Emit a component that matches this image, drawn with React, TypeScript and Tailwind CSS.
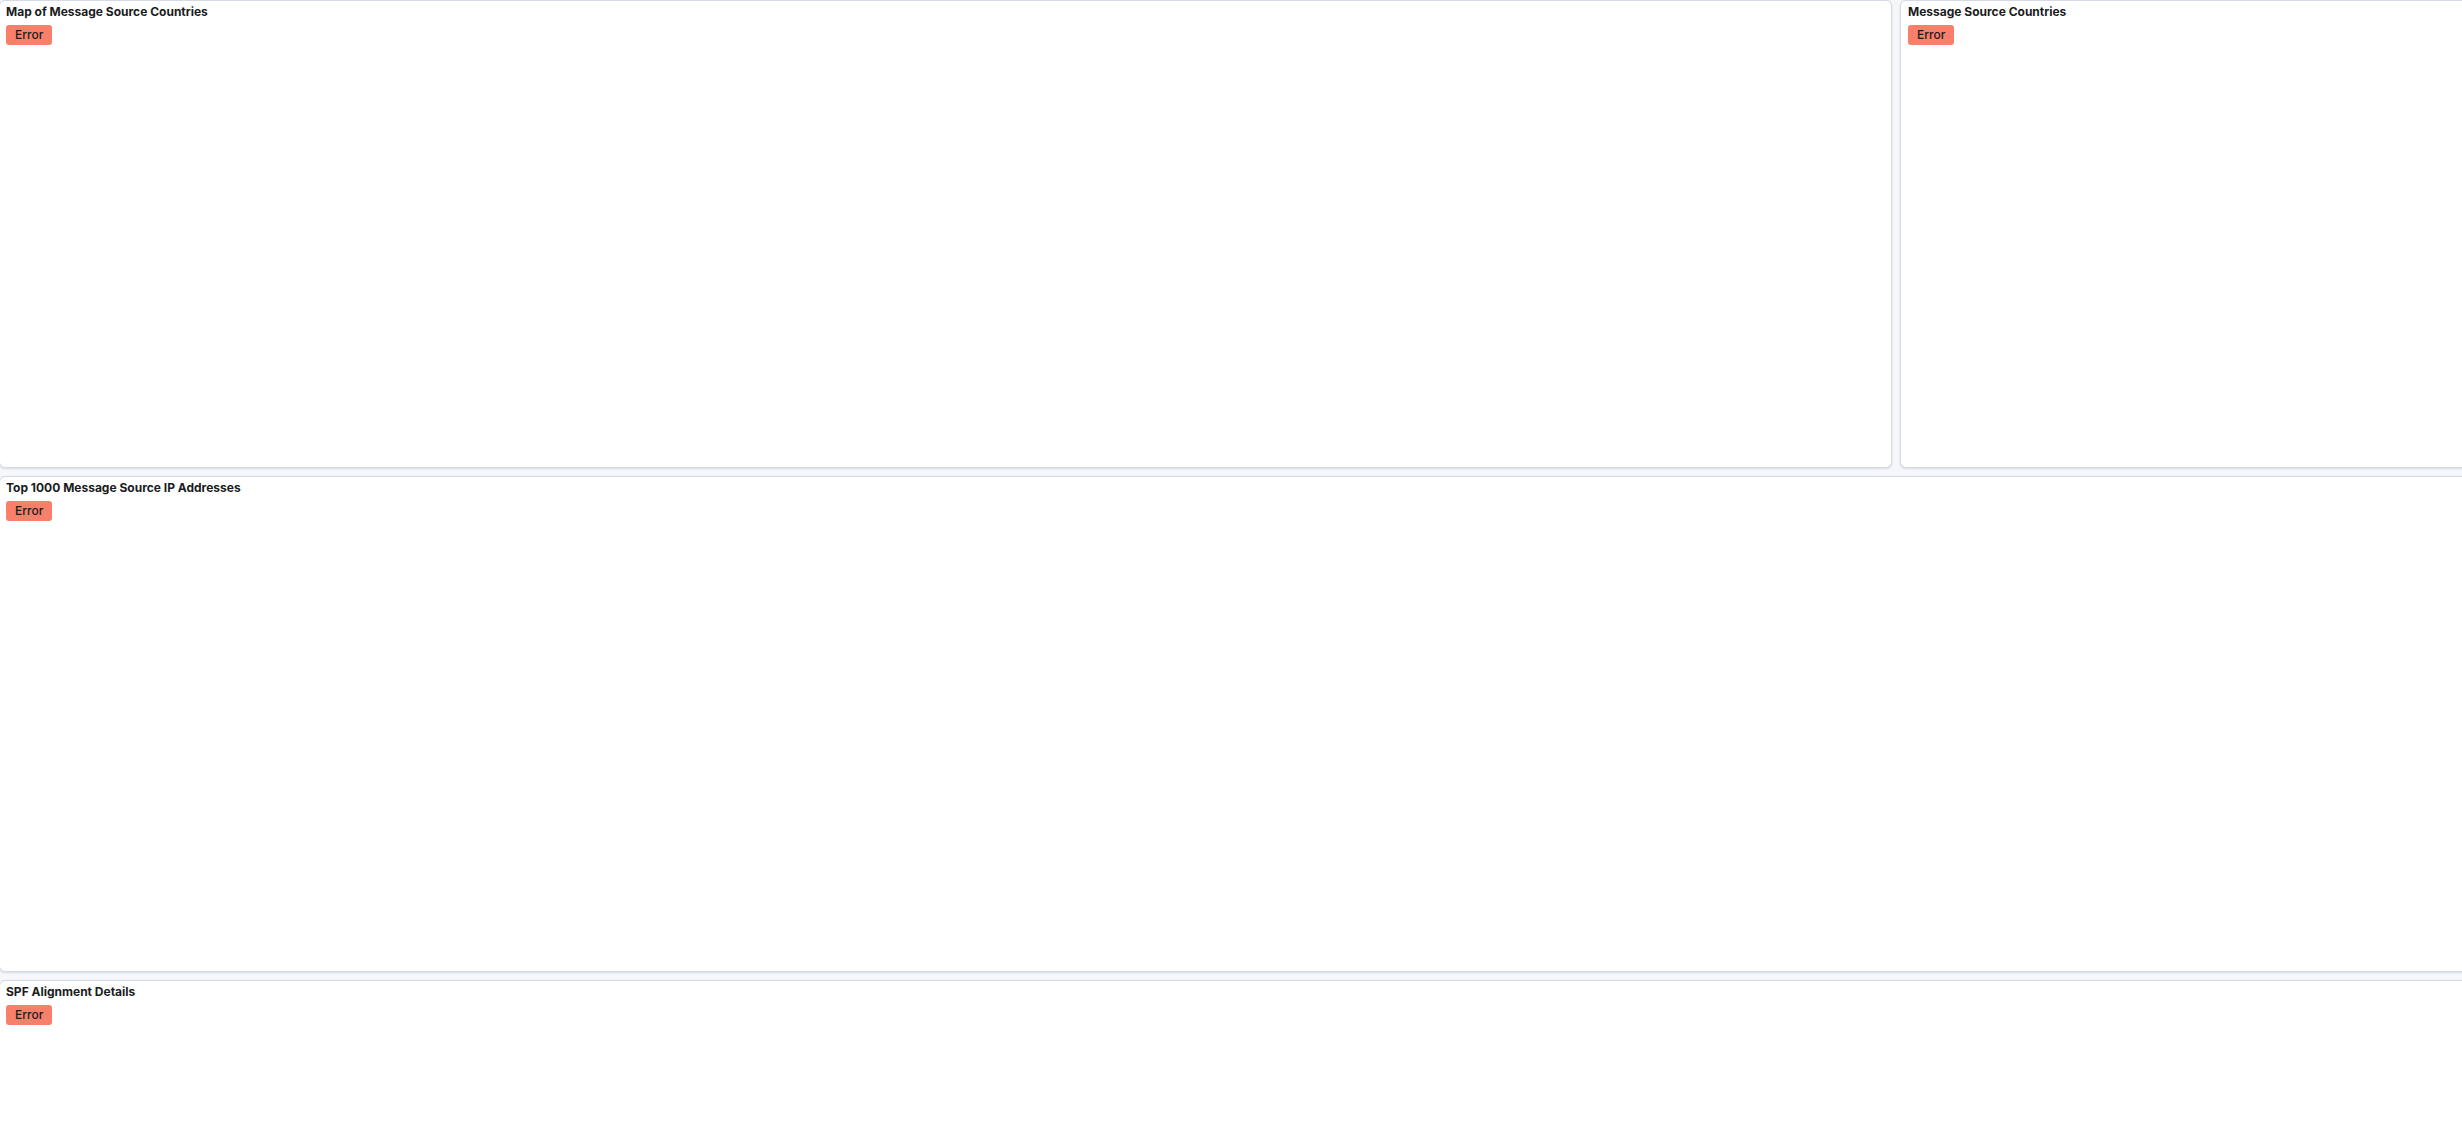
import React from "react";

type PanelProps = {
  title: string;
  className?: string;
};

function Panel({ title, className = "" }: PanelProps) {
  return (
    <div
      className={`shrink-0 bg-white border border-[#d3dae6] rounded-[6px] shadow-[0_1px_2px_rgba(152,162,179,0.35)] pr-[6px] pt-[3px] overflow-hidden ${className}`}
    >
      <h2 className="text-[12px] leading-[16px] font-bold text-[#1a1c21] whitespace-nowrap">{title}</h2>
      <div className="mt-[5px] flex">
        <span className="h-[20px] px-[9px] rounded-[3px] bg-[#f8806a] text-[12px] leading-[20px] font-medium text-[#1a1c21]">
          Error
        </span>
      </div>
    </div>
  );
}

export default function App() {
  return (
    <div
      className="w-[2462px] h-[1136px] overflow-hidden bg-[#f5f7fa]"
      style={{ fontFamily: "Inter, 'Noto Sans', sans-serif" }}
    >
      <div className="-ml-px flex flex-col gap-2 w-[3200px]">
        {/* Row 1 */}
        <div className="flex gap-2 h-[468px]">
          <Panel title="Map of Message Source Countries" className="w-[1893px] h-full pl-[6px]" />
          <Panel title="Message Source Countries" className="w-[1200px] h-full pl-[7px]" />
        </div>

        {/* Row 2 */}
        <Panel title="Top 1000 Message Source IP Addresses" className="w-[3000px] h-[496px] pl-[6px]" />

        {/* Row 3 */}
        <Panel title="SPF Alignment Details" className="w-[3000px] h-[400px] pl-[6px]" />
      </div>
    </div>
  );
}
